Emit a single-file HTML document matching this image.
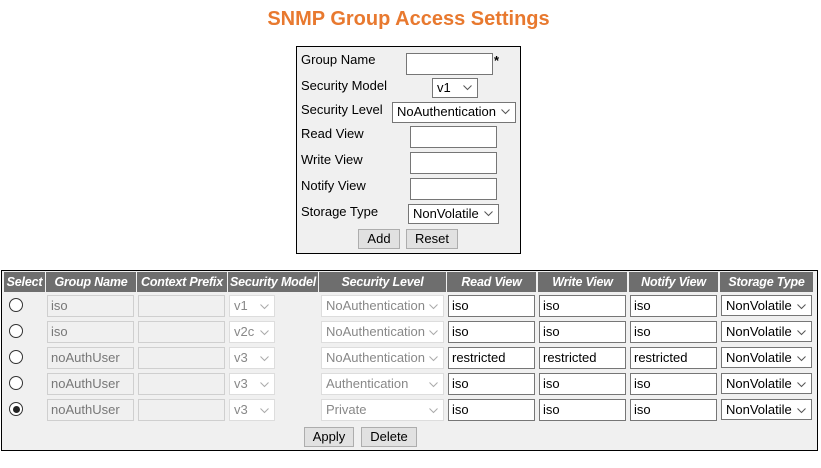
<!DOCTYPE html>
<html><head><meta charset="utf-8"><style>
*{box-sizing:border-box;margin:0;padding:0}
body{width:821px;height:468px;background:#fff;font-family:"Liberation Sans",Arial,sans-serif;position:relative;overflow:hidden}
.a{position:absolute}
.t{font-size:13px;color:#000}
.in{position:absolute;background:#fff;border:1px solid #767676;font-size:13px;padding-left:3px;line-height:20px;color:#000}
.dis{background:#f0f0f0;border-color:#cfcfcf;color:#777}
.sel{position:absolute;background:#fff;border:1px solid #767676;font-size:13px;padding-left:4px;line-height:17px;color:#000;white-space:nowrap}
.sel svg{position:absolute;right:5px;top:6px}
.sel.dis{background:#fff;border-color:#ddd;color:#888}
.btn{position:absolute;background:#e1e1e1;border:1px solid #adadad;font-size:13px;text-align:center;line-height:17px;color:#000}
.th{position:absolute;top:272px;height:20px;background:#6e6e6e;color:#fff;font-weight:bold;font-style:italic;font-size:12.5px;text-align:center;line-height:20px;white-space:nowrap;overflow:hidden;letter-spacing:-0.2px}
.rad{position:absolute;left:9px;width:14px;height:14px;border:1px solid #333;border-radius:50%;background:#fff}
</style></head><body>
<div class="a" style="left:0;top:8px;width:817px;text-align:center;font-size:20px;font-weight:bold;color:#e8792f">SNMP Group Access Settings</div>

<div class="a" style="left:296px;top:46px;width:225px;height:208px;background:#f0f0f0;border:1px solid #000"></div>
<div class="a t" style="left:301px;top:52px">Group Name</div>
<div class="in" style="left:406px;top:53px;width:87px;height:22px"></div>
<div class="a t" style="left:494px;top:53px;font-weight:bold">*</div>
<div class="a t" style="left:301px;top:78px">Security Model</div>
<div class="sel" style="left:432px;top:78px;width:46px;height:20px">v1<svg width="9" height="6"><polyline points="0.5,0.5 4.5,4.5 8.5,0.5" fill="none" stroke="#555"/></svg></div>
<div class="a t" style="left:301px;top:102px">Security Level</div>
<div class="sel" style="left:392px;top:102px;width:124px;height:21px">NoAuthentication<svg width="9" height="6"><polyline points="0.5,0.5 4.5,4.5 8.5,0.5" fill="none" stroke="#555"/></svg></div>
<div class="a t" style="left:301px;top:126px">Read View</div>
<div class="in" style="left:410px;top:126px;width:87px;height:22px"></div>
<div class="a t" style="left:301px;top:152px">Write View</div>
<div class="in" style="left:410px;top:152px;width:87px;height:22px"></div>
<div class="a t" style="left:301px;top:178px">Notify View</div>
<div class="in" style="left:410px;top:178px;width:87px;height:22px"></div>
<div class="a t" style="left:301px;top:204px">Storage Type</div>
<div class="sel" style="left:408px;top:204px;width:91px;height:20px">NonVolatile<svg width="9" height="6"><polyline points="0.5,0.5 4.5,4.5 8.5,0.5" fill="none" stroke="#555"/></svg></div>
<div class="btn" style="left:358px;top:229px;width:42px;height:20px">Add</div>
<div class="btn" style="left:406px;top:229px;width:52px;height:20px">Reset</div>

<div class="a" style="left:1px;top:270px;width:817px;height:181px;background:#f0f0f0;border:1px solid #000"></div>
<div class="th" style="left:4px;width:41px">Select</div>
<div class="th" style="left:46px;width:90px">Group Name</div>
<div class="th" style="left:137px;width:90px">Context Prefix</div>
<div class="th" style="left:228px;width:90px">Security Model</div>
<div class="th" style="left:319px;width:127px">Security Level</div>
<div class="th" style="left:447px;width:89px">Read View</div>
<div class="th" style="left:538px;width:89px">Write View</div>
<div class="th" style="left:629px;width:89px">Notify View</div>
<div class="th" style="left:720px;width:93px">Storage Type</div>

<div class="rad" style="top:298px"></div>
<div class="in dis" style="left:47px;top:295px;width:87px;height:22px">iso</div>
<div class="in dis" style="left:138px;top:295px;width:87px;height:22px"></div>
<div class="sel dis" style="left:229px;top:295px;width:46px;height:22px;line-height:19px">v1<svg width="9" height="6" style="top:8px"><polyline points="0.5,0.5 4.5,4.5 8.5,0.5" fill="none" stroke="#aaa"/></svg></div>
<div class="sel dis" style="left:321px;top:295px;width:123px;height:22px;line-height:19px">NoAuthentication<svg width="9" height="6" style="top:8px"><polyline points="0.5,0.5 4.5,4.5 8.5,0.5" fill="none" stroke="#aaa"/></svg></div>
<div class="in" style="left:448px;top:295px;width:87px;height:22px">iso</div>
<div class="in" style="left:539px;top:295px;width:87px;height:22px">iso</div>
<div class="in" style="left:630px;top:295px;width:87px;height:22px">iso</div>
<div class="sel" style="left:721px;top:295px;width:91px;height:21px;line-height:19px">NonVolatile<svg width="9" height="6" style="top:8px"><polyline points="0.5,0.5 4.5,4.5 8.5,0.5" fill="none" stroke="#555"/></svg></div>

<div class="rad" style="top:324px"></div>
<div class="in dis" style="left:47px;top:321px;width:87px;height:22px">iso</div>
<div class="in dis" style="left:138px;top:321px;width:87px;height:22px"></div>
<div class="sel dis" style="left:229px;top:321px;width:46px;height:22px;line-height:19px">v2c<svg width="9" height="6" style="top:8px"><polyline points="0.5,0.5 4.5,4.5 8.5,0.5" fill="none" stroke="#aaa"/></svg></div>
<div class="sel dis" style="left:321px;top:321px;width:123px;height:22px;line-height:19px">NoAuthentication<svg width="9" height="6" style="top:8px"><polyline points="0.5,0.5 4.5,4.5 8.5,0.5" fill="none" stroke="#aaa"/></svg></div>
<div class="in" style="left:448px;top:321px;width:87px;height:22px">iso</div>
<div class="in" style="left:539px;top:321px;width:87px;height:22px">iso</div>
<div class="in" style="left:630px;top:321px;width:87px;height:22px">iso</div>
<div class="sel" style="left:721px;top:321px;width:91px;height:21px;line-height:19px">NonVolatile<svg width="9" height="6" style="top:8px"><polyline points="0.5,0.5 4.5,4.5 8.5,0.5" fill="none" stroke="#555"/></svg></div>

<div class="rad" style="top:350px"></div>
<div class="in dis" style="left:47px;top:347px;width:87px;height:22px">noAuthUser</div>
<div class="in dis" style="left:138px;top:347px;width:87px;height:22px"></div>
<div class="sel dis" style="left:229px;top:347px;width:46px;height:22px;line-height:19px">v3<svg width="9" height="6" style="top:8px"><polyline points="0.5,0.5 4.5,4.5 8.5,0.5" fill="none" stroke="#aaa"/></svg></div>
<div class="sel dis" style="left:321px;top:347px;width:123px;height:22px;line-height:19px">NoAuthentication<svg width="9" height="6" style="top:8px"><polyline points="0.5,0.5 4.5,4.5 8.5,0.5" fill="none" stroke="#aaa"/></svg></div>
<div class="in" style="left:448px;top:347px;width:87px;height:22px">restricted</div>
<div class="in" style="left:539px;top:347px;width:87px;height:22px">restricted</div>
<div class="in" style="left:630px;top:347px;width:87px;height:22px">restricted</div>
<div class="sel" style="left:721px;top:347px;width:91px;height:21px;line-height:19px">NonVolatile<svg width="9" height="6" style="top:8px"><polyline points="0.5,0.5 4.5,4.5 8.5,0.5" fill="none" stroke="#555"/></svg></div>

<div class="rad" style="top:376px"></div>
<div class="in dis" style="left:47px;top:373px;width:87px;height:22px">noAuthUser</div>
<div class="in dis" style="left:138px;top:373px;width:87px;height:22px"></div>
<div class="sel dis" style="left:229px;top:373px;width:46px;height:22px;line-height:19px">v3<svg width="9" height="6" style="top:8px"><polyline points="0.5,0.5 4.5,4.5 8.5,0.5" fill="none" stroke="#aaa"/></svg></div>
<div class="sel dis" style="left:321px;top:373px;width:123px;height:22px;line-height:19px">Authentication<svg width="9" height="6" style="top:8px"><polyline points="0.5,0.5 4.5,4.5 8.5,0.5" fill="none" stroke="#aaa"/></svg></div>
<div class="in" style="left:448px;top:373px;width:87px;height:22px">iso</div>
<div class="in" style="left:539px;top:373px;width:87px;height:22px">iso</div>
<div class="in" style="left:630px;top:373px;width:87px;height:22px">iso</div>
<div class="sel" style="left:721px;top:373px;width:91px;height:21px;line-height:19px">NonVolatile<svg width="9" height="6" style="top:8px"><polyline points="0.5,0.5 4.5,4.5 8.5,0.5" fill="none" stroke="#555"/></svg></div>

<div class="rad" style="top:402px"><div class="a" style="left:2.5px;top:2.5px;width:7px;height:7px;border-radius:50%;background:#222"></div></div>
<div class="in dis" style="left:47px;top:399px;width:87px;height:22px">noAuthUser</div>
<div class="in dis" style="left:138px;top:399px;width:87px;height:22px"></div>
<div class="sel dis" style="left:229px;top:399px;width:46px;height:22px;line-height:19px">v3<svg width="9" height="6" style="top:8px"><polyline points="0.5,0.5 4.5,4.5 8.5,0.5" fill="none" stroke="#aaa"/></svg></div>
<div class="sel dis" style="left:321px;top:399px;width:123px;height:22px;line-height:19px">Private<svg width="9" height="6" style="top:8px"><polyline points="0.5,0.5 4.5,4.5 8.5,0.5" fill="none" stroke="#aaa"/></svg></div>
<div class="in" style="left:448px;top:399px;width:87px;height:22px">iso</div>
<div class="in" style="left:539px;top:399px;width:87px;height:22px">iso</div>
<div class="in" style="left:630px;top:399px;width:87px;height:22px">iso</div>
<div class="sel" style="left:721px;top:399px;width:91px;height:21px;line-height:19px">NonVolatile<svg width="9" height="6" style="top:8px"><polyline points="0.5,0.5 4.5,4.5 8.5,0.5" fill="none" stroke="#555"/></svg></div>

<div class="btn" style="left:304px;top:427px;width:50px;height:20px">Apply</div>
<div class="btn" style="left:361px;top:427px;width:56px;height:20px">Delete</div>
</body></html>
